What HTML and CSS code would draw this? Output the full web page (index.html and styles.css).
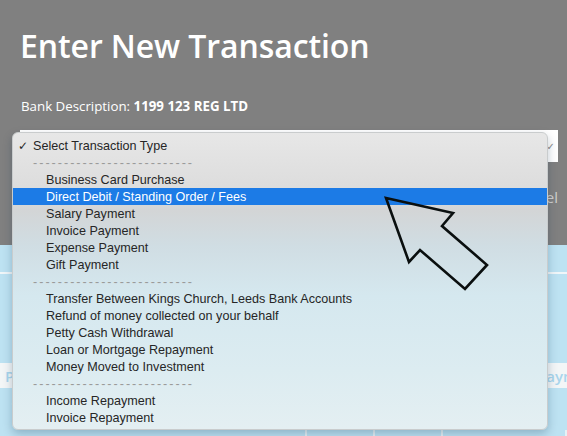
FILE: index.html
```html
<html lang="en">
<head>
    <meta charset="UTF-8">
    <meta name="viewport" content="width=device-width, initial-scale=1.0">
    <title>Enter New Transaction</title>
    <link rel="stylesheet" href="styles.css">
</head>
<body>
    <div class="page">
        <header class="head">
            <h1>Enter New Transaction</h1>
            <p class="bank">Bank Description: <strong>1199 123 REG LTD</strong></p>
            <div class="select-box"><span class="chev">&#10003;</span></div>
            <div class="actions"><a class="cancel">Cancel</a></div>
        </header>
        <section class="grid">
            <div class="band"></div>
            <div class="rule"></div>
            <div class="gap"></div>
            <div class="head-row"><span class="col-a">Payee</span><span>Payment</span></div>
            <div class="num-row"><span>1</span></div>
            <div class="cells">
                <span class="cell"></span><span class="cell"></span><span class="cell"></span>
            </div>
        </section>

        <ul class="menu">
            <li class="opt first"><span class="tick">&#10003;</span>Select Transaction Type</li>
            <li class="opt sep">--------------------------</li>
            <li class="opt">Business Card Purchase</li>
            <li class="opt active">Direct Debit / Standing Order / Fees</li>
            <li class="opt">Salary Payment</li>
            <li class="opt">Invoice Payment</li>
            <li class="opt">Expense Payment</li>
            <li class="opt">Gift Payment</li>
            <li class="opt sep">--------------------------</li>
            <li class="opt">Transfer Between Kings Church, Leeds Bank Accounts</li>
            <li class="opt">Refund of money collected on your behalf</li>
            <li class="opt">Petty Cash Withdrawal</li>
            <li class="opt">Loan or Mortgage Repayment</li>
            <li class="opt">Money Moved to Investment</li>
            <li class="opt sep">--------------------------</li>
            <li class="opt">Income Repayment</li>
            <li class="opt">Invoice Repayment</li>
        </ul>

        <svg class="pointer" width="567" height="436" viewBox="0 0 567 436">
            <polygon points="386,198 453,213 442,226 487,265 465,289 420,250 409,262" fill="none" stroke="#0a0f0f" stroke-width="2.6" stroke-linejoin="miter"/>
        </svg>
    </div>
</body>
</html>
```

FILE: styles.css
```css
body {
    margin: 0;
    font-family: 'Open Sans', sans-serif;
    background: #808080;
    overflow: hidden;
}
.page { position: relative; width: 567px; height: 436px; overflow: hidden; }

.head { padding: 24px 9px 38px 20px; }
h1 {
    margin: 0;
    font-size: 32px;
    line-height: 44px;
    font-weight: 600;
    color: #fff;
    letter-spacing: -0.1px;
}
.bank { margin: 28px 0 0 1px; font-size: 13.3px; line-height: 20px; color: #fff; }
.bank strong { font-weight: 700; }
.select-box {
    margin-top: 14px;
    height: 32px;
    background: #fff;
    display: flex;
    justify-content: flex-end;
    align-items: center;
    padding-right: 3px;
}
.chev { font-size: 10px; color: #8a8a8a; font-family: 'DejaVu Sans', sans-serif; }
.actions { margin-top: 25px; display: flex; justify-content: flex-end; }
.cancel { font-size: 15px; line-height: 20px; color: #cfcfcf; }

.grid { background: #bde2f2; height: 191px; }
.band { height: 27px; }
.rule { height: 2px; background: #f0f6f9; }
.gap { height: 89px; }
.head-row {
    height: 25px;
    background: #f3f6f7;
    display: flex;
    align-items: center;
    font-size: 15px;
    font-weight: 600;
    color: #a9d5ec;
    white-space: nowrap;
}
.col-a { width: 532px; padding-left: 5px; flex-shrink: 0; }
.num-row { height: 42px; padding-left: 10px; font-size: 13px; color: #d5ebf5; line-height: 36px; }
.cells { display: flex; height: 6px; }
.cell { width: 66px; border-left: 2px solid #e6f1f5; }
.cell:first-child { margin-left: 305px; }
.cell:last-child { width: 122px; border-right: 2px solid #e6f1f5; }

.menu {
    position: absolute;
    left: 12px;
    top: 132px;
    width: 536px;
    height: 298px;
    box-sizing: border-box;
    margin: 0;
    padding: 4px 0 0;
    list-style: none;
    border: 1px solid #c9cccd;
    border-radius: 6px;
    background: linear-gradient(180deg, #e7e7e7 0%, #dcdcdc 20%, #d3d5d6 26%, #d0dde3 38%, #d5e8ef 55%, #dcecf1 80%, #e4eff2 100%);
    box-shadow: 0 4px 10px rgba(0, 40, 70, 0.25);
    font-family: 'Liberation Sans', Arial, sans-serif;
    font-size: 12.6px;
    color: #262626;
}
.opt { height: 17px; line-height: 19px; padding-left: 33px; white-space: nowrap; }
.opt.first { padding-left: 5px; }
.tick { display: inline-block; width: 15px; font-family: 'DejaVu Sans', sans-serif; font-size: 12px; }
.opt.sep { color: #9a9a9a; letter-spacing: 2px; padding-left: 20px; }
.opt.active { background: #1c7be6; color: #fff; }

.pointer { position: absolute; left: 0; top: 0; }
```
